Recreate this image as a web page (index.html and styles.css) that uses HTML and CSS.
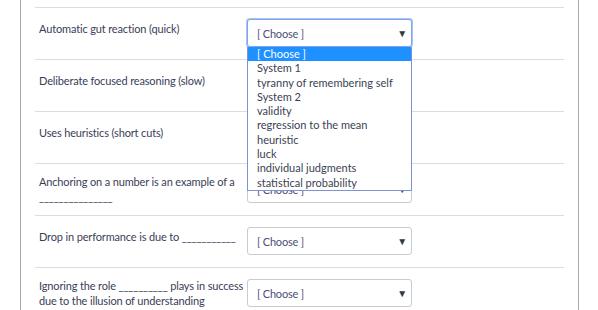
FILE: index.html
```html
<!DOCTYPE html>
<html lang="en">
<head>
  <meta charset="UTF-8" />
  <title>Matching Question</title>
  <link rel="stylesheet" href="styles.css">
</head>
<body>
  <div class="question">
    <div class="answers">

      <div class="row">
        <div class="label">Automatic gut reaction (quick)</div>
        <div class="select-wrap">
          <div class="select focused">
            <span>[ Choose ]</span>
            <span class="arrow">&#9660;</span>
          </div>
          <ul class="options">
            <li class="active">[ Choose ]</li>
            <li>System 1</li>
            <li>tyranny of remembering self</li>
            <li>System 2</li>
            <li>validity</li>
            <li>regression to the mean</li>
            <li>heuristic</li>
            <li>luck</li>
            <li>individual judgments</li>
            <li>statistical probability</li>
          </ul>
        </div>
      </div>

      <div class="row">
        <div class="label">Deliberate focused reasoning (slow)</div>
        <div class="select-wrap">
          <div class="select"><span>[ Choose ]</span><span class="arrow">&#9660;</span></div>
        </div>
      </div>

      <div class="row">
        <div class="label">Uses heuristics (short cuts)</div>
        <div class="select-wrap">
          <div class="select"><span>[ Choose ]</span><span class="arrow">&#9660;</span></div>
        </div>
      </div>

      <div class="row">
        <div class="label multi">Anchoring on a number is an example of a _______________</div>
        <div class="select-wrap">
          <div class="select"><span>[ Choose ]</span><span class="arrow">&#9660;</span></div>
        </div>
      </div>

      <div class="row">
        <div class="label">Drop in performance is due to ___________</div>
        <div class="select-wrap">
          <div class="select"><span>[ Choose ]</span><span class="arrow">&#9660;</span></div>
        </div>
      </div>

      <div class="row">
        <div class="label multi">Ignoring the role __________ plays in success due to the illusion of understanding</div>
        <div class="select-wrap">
          <div class="select"><span>[ Choose ]</span><span class="arrow">&#9660;</span></div>
        </div>
      </div>

    </div>
  </div>
</body>
</html>
```

FILE: styles.css
```css
* {
  box-sizing: border-box;
}

body {
  margin: 0;
  background: #fff;
  font-family: Lato, "Open Sans", sans-serif;
  color: #2d3b45;
}

.question {
  margin: 0 19px 0 20px;
  border-left: 1px solid #a8a8a8;
  border-right: 1px solid #a8a8a8;
  padding: 7px 14px 0 14px;
  height: 310px;
}

.row {
  display: flex;
  align-items: flex-start;
  border-top: 1px solid #dcdcdc;
  padding: 11px 0 12px 4px;
  height: 52px;
}

.label {
  width: 208px;
  font-size: 11px;
  letter-spacing: -0.15px;
  line-height: 14.5px;
  padding-top: 3px;
  color: #3a3d58;
}

.label.multi {
  padding-top: 0;
}

.select-wrap {
  position: relative;
  width: 165px;
}

.select {
  height: 28px;
  border: 1px solid #c8ccd0;
  border-radius: 3px;
  display: flex;
  align-items: center;
  justify-content: space-between;
  padding: 0 4px 0 9px;
  font-size: 11px;
  letter-spacing: -0.2px;
  color: #4a4f78;
  background: #fff;
}

.select.focused {
  border-color: #7fa6ea;
  box-shadow: 0 0 0 1px #a9c4f3;
}

.arrow {
  font-size: 10px;
  color: #2d3b45;
}

.options {
  position: absolute;
  top: 28px;
  left: 0;
  width: 165px;
  margin: 0;
  padding: 0;
  list-style: none;
  background: #fff;
  border: 1px solid #7b93d1;
  border-top: none;
  z-index: 2;
}

.options li {
  font-size: 11px;
  line-height: 14.3px;
  padding-left: 9px;
  color: #3a3f55;
}

.options li.active {
  background: #1e90ff;
  color: #fff;
}
```
